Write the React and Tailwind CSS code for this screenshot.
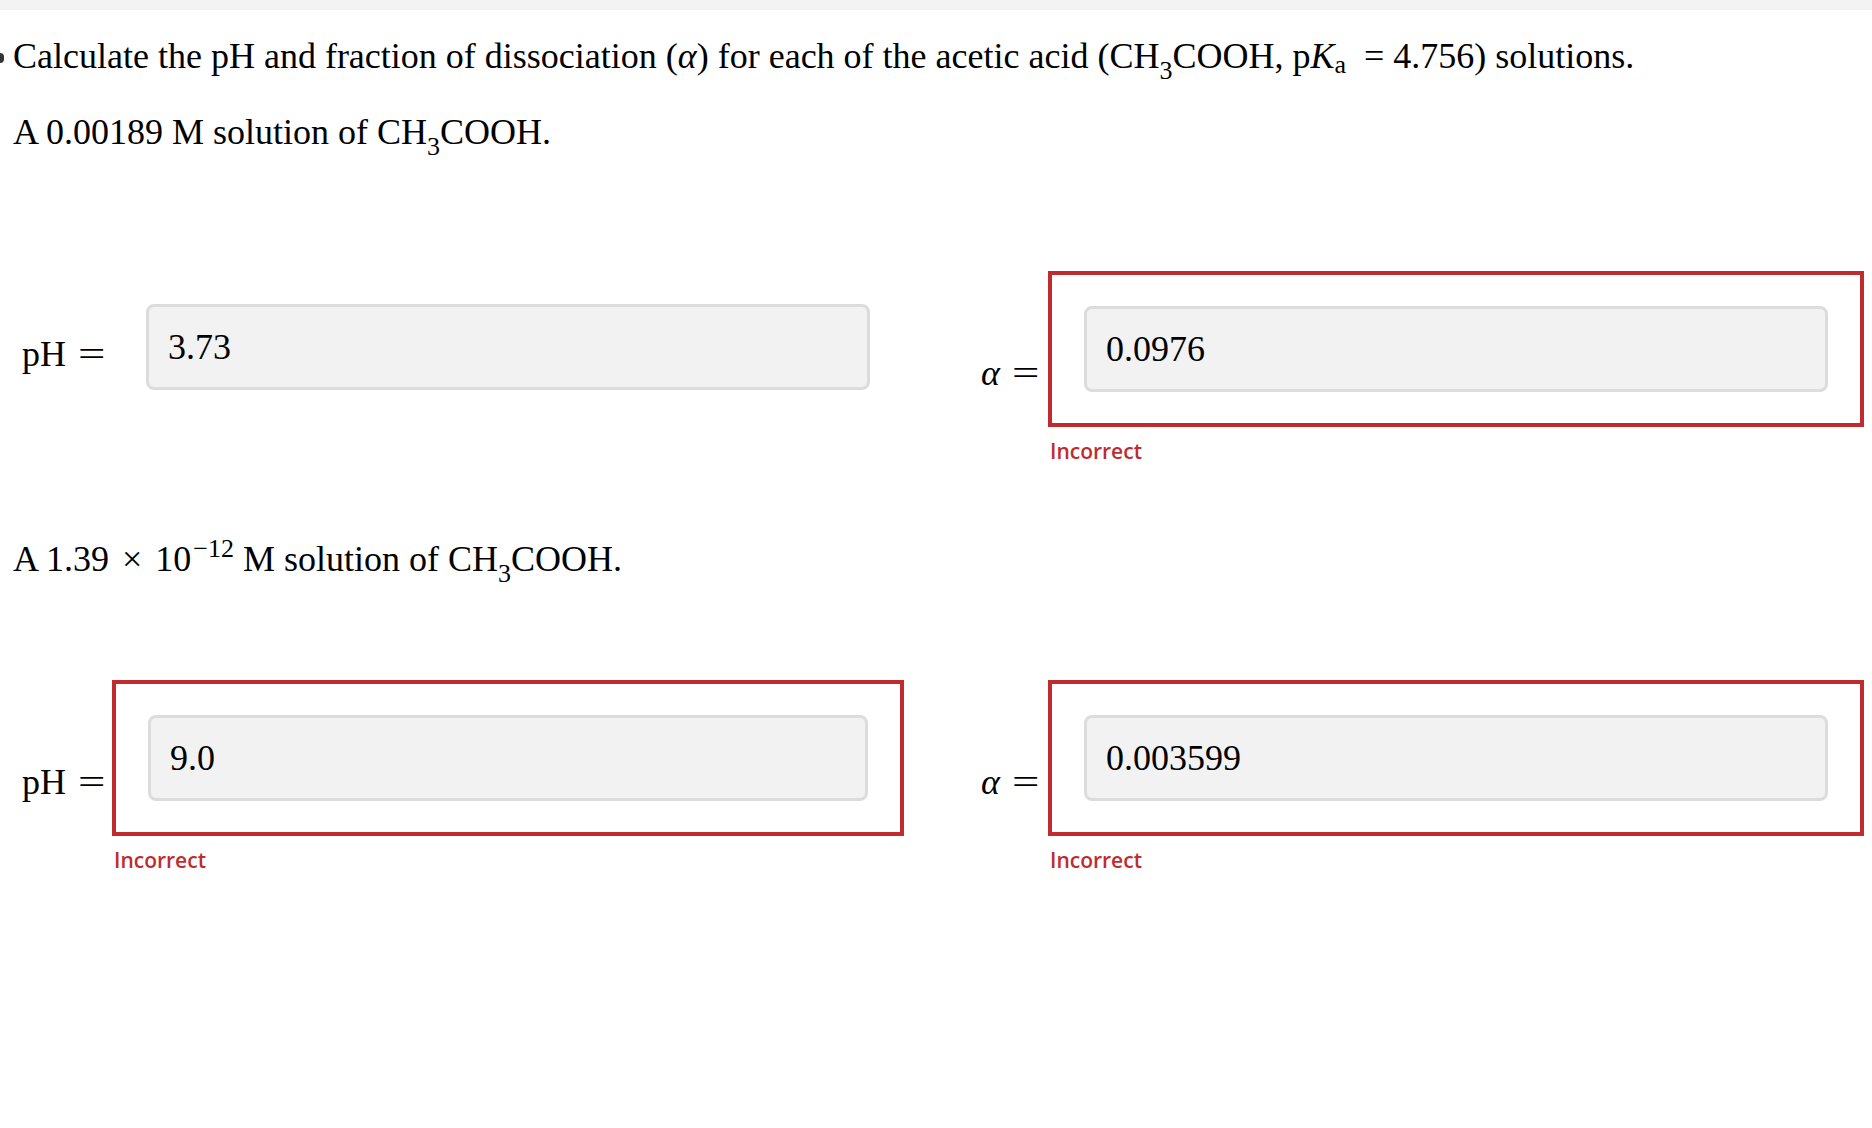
import React from 'react';

// answer box (grey input look)
const Field = ({ value, className = '' }) => (
    <div className={`flex items-center h-[86px] pl-[19px] rounded-[8px] border-[3px] border-[#dcdcdc] bg-[#f2f2f2] text-[36px] leading-[44px] ${className}`}>
        {value}
    </div>
);

// red frame round a wrong answer
const Wrong = ({ value, className = '' }) => (
    <div className={className}>
        <div className="border-[4px] border-[#c02b2f] px-[32px] py-[31px]">
            <Field value={value} />
        </div>
    </div>
);

const Note = ({ className = '' }) => (
    <div className={`mt-[12px] font-['Open_Sans',sans-serif] font-semibold text-[21px] leading-[24px] text-[#c02b2f] ${className}`}>
        Incorrect
    </div>
);

const Sub = ({ children, shift = 'top-[11px]' }) => (
    <span className={`relative ${shift} text-[26px]`}>{children}</span>
);

const Eq = () => <span className="ml-[12px] inline-block scale-x-[1.35] origin-left">=</span>;

const App = () => {
    return (
        <div className="min-h-screen bg-white text-black font-['Liberation_Serif','Times_New_Roman',serif]">
            <div className="h-[10px] bg-[#f3f3f3]" />

            <div className="mt-[24px] flex items-center text-[36px] leading-[44px]">
                <span className="inline-block w-[4px] h-[10px] mr-[9px] rounded-r-full bg-[#333]" />
                <p>
                    Calculate the pH and fraction of dissociation (<i>α</i>) for each of the acetic acid (CH<Sub>3</Sub>COOH, p<i>K</i><Sub shift="top-[5px]">a</Sub>&nbsp; = 4.756) solutions.
                </p>
            </div>

            <p className="mt-[28px] pl-[13px] text-[36px] leading-[44px]">
                A 0.00189 M solution of CH<Sub>3</Sub>COOH.
            </p>

            {/* first solution */}
            <div className="mt-[113px] grid grid-cols-[981px_1fr] pr-[8px]">
                <div className="flex items-end pl-[22px] pt-[33px] self-start">
                    <span className="w-[124px] mb-[14px] text-[36px] leading-[44px]">pH<Eq /></span>
                    <Field value="3.73" className="w-[724px]" />
                </div>
                <div>
                    <div className="flex items-end">
                        <span className="w-[67px] shrink-0 mb-[32px] text-[36px] leading-[44px]"><i>α</i><Eq /></span>
                        <Wrong value="0.0976" className="flex-1" />
                    </div>
                    <Note className="ml-[69px]" />
                </div>
            </div>

            <p className="mt-[74px] pl-[13px] text-[36px] leading-[44px]">
                A 1.39<span className="mx-[13px]">×</span>10<span className="relative top-[-14px] ml-[2px] text-[26px]">−12</span> M solution of CH<Sub>3</Sub>COOH.
            </p>

            {/* second solution */}
            <div className="mt-[95px] grid grid-cols-[981px_1fr] pr-[8px]">
                <div className="pl-[22px]">
                    <div className="flex items-end">
                        <span className="w-[90px] mb-[32px] text-[36px] leading-[44px]">pH<Eq /></span>
                        <Wrong value="9.0" className="w-[792px]" />
                    </div>
                    <Note className="ml-[92px]" />
                </div>
                <div>
                    <div className="flex items-end">
                        <span className="w-[67px] shrink-0 mb-[32px] text-[36px] leading-[44px]"><i>α</i><Eq /></span>
                        <Wrong value="0.003599" className="flex-1" />
                    </div>
                    <Note className="ml-[69px]" />
                </div>
            </div>
        </div>
    );
};

export default App;
